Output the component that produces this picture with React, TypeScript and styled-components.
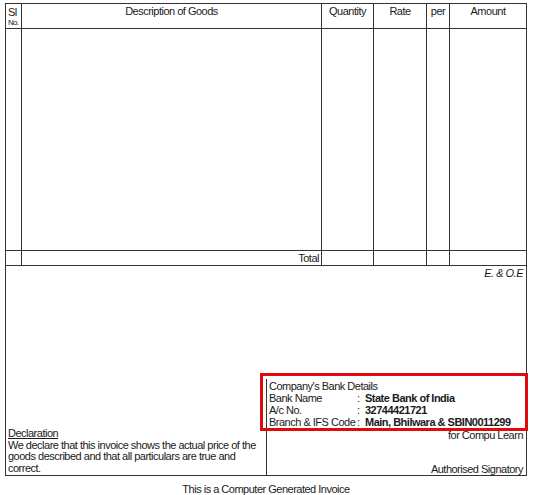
import React from "react";
import styled, { createGlobalStyle } from "styled-components";

const Global = createGlobalStyle`
  html, body { margin: 0; padding: 0; background: #fff; }
  body {
    font-family: "Liberation Sans", Arial, sans-serif;
    color: #1a1a1a;
    font-size: 11px;
    letter-spacing: -0.5px;
  }
`;

const Page = styled.div`
  padding: 3px 0 0 5px;
  width: 522px;
`;

const Frame = styled.div`
  border: 1px solid #333;
  width: 520px;
`;

const Row = styled.div<{ $h: number }>`
  display: grid;
  grid-template-columns: 16px 300px 52px 53px 23px 76px;
  height: ${(p) => p.$h}px;
  border-bottom: 1px solid #333;
`;

const Cell = styled.div<{ $align?: string; $last?: boolean }>`
  border-right: ${(p) => (p.$last ? "none" : "1px solid #333")};
  text-align: ${(p) => p.$align || "center"};
  font-size: 11px;
  line-height: 12px;
  padding: 1px 2px 0;
  overflow: hidden;
`;

const SmallNo = styled.div`
  font-size: 8px;
  line-height: 10px;
  text-align: left;
  letter-spacing: -0.8px;
`;

const SlLabel = styled.div`
  text-align: left;
  padding-top: 1px;
`;

const Lower = styled.div`
  height: 209px;
  display: flex;
  flex-direction: column;
`;

const EOE = styled.div`
  text-align: right;
  font-style: italic;
  padding: 1px 3px 0 0;
  line-height: 12px;
`;

const Spacer = styled.div`
  flex: 1;
`;

const Bottom = styled.div`
  display: grid;
  grid-template-columns: 260px 1fr;
  align-items: end;
`;

const Declaration = styled.div`
  padding: 0 2px 1px 2px;
  line-height: 11.5px;
  font-size: 11px;
`;

const DeclTitle = styled.div`
  text-decoration: underline;
  margin-bottom: 0.5px;
`;

const RightCol = styled.div`
  border-left: 1px solid #333;
  height: 96px;
  display: flex;
  flex-direction: column;
  padding: 1px 3px 0 2px;
  box-sizing: border-box;
`;

const BankBox = styled.div`
  position: relative;
  line-height: 12px;
  &::after {
    content: "";
    position: absolute;
    left: -9px;
    top: -7px;
    right: -5px;
    bottom: -3px;
    border: 3px solid #e00a0a;
    pointer-events: none;
  }
`;

const BankRow = styled.div`
  display: grid;
  grid-template-columns: 88px 8px 1fr;
  white-space: nowrap;
`;

const Value = styled.span`
  font-weight: bold;
`;

const ForCompany = styled.div`
  text-align: right;
  line-height: 12px;
  margin-top: 1px;
`;

const Signatory = styled.div`
  margin-top: auto;
  text-align: right;
  line-height: 12px;
`;

const Footer = styled.div`
  text-align: center;
  width: 522px;
  padding-top: 7px;
  font-size: 11px;
`;

export default function App() {
  return (
    <>
      <Global />
      <Page>
        <Frame>
          <Row $h={24}>
            <Cell $align="left">
              <SlLabel>Sl</SlLabel>
              <SmallNo>No.</SmallNo>
            </Cell>
            <Cell>Description of Goods</Cell>
            <Cell>Quantity</Cell>
            <Cell>Rate</Cell>
            <Cell>per</Cell>
            <Cell $last>Amount</Cell>
          </Row>
          <Row $h={221}>
            <Cell />
            <Cell />
            <Cell />
            <Cell />
            <Cell />
            <Cell $last />
          </Row>
          <Row $h={14}>
            <Cell />
            <Cell $align="right">Total</Cell>
            <Cell />
            <Cell />
            <Cell />
            <Cell $last />
          </Row>
          <Lower>
            <EOE>E. &amp; O.E</EOE>
            <Spacer />
            <Bottom>
              <Declaration>
                <DeclTitle>Declaration</DeclTitle>
                We declare that this invoice shows the actual price of the goods described and that all
                particulars are true and correct.
              </Declaration>
              <RightCol>
                <BankBox>
                  <div>Company's Bank Details</div>
                  <BankRow>
                    <span>Bank Name</span>
                    <span>:</span>
                    <Value>State Bank of India</Value>
                  </BankRow>
                  <BankRow>
                    <span>A/c No.</span>
                    <span>:</span>
                    <Value>32744421721</Value>
                  </BankRow>
                  <BankRow>
                    <span>Branch &amp; IFS Code</span>
                    <span>:</span>
                    <Value>Main, Bhilwara &amp; SBIN0011299</Value>
                  </BankRow>
                </BankBox>
                <ForCompany>for Compu Learn</ForCompany>
                <Signatory>Authorised Signatory</Signatory>
              </RightCol>
            </Bottom>
          </Lower>
        </Frame>
        <Footer>This is a Computer Generated Invoice</Footer>
      </Page>
    </>
  );
}
